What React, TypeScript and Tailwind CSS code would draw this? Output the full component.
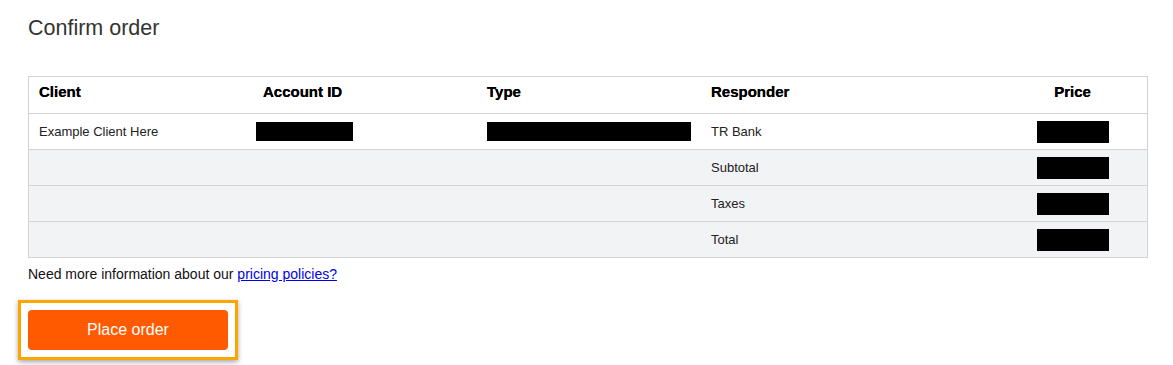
import React from 'react';

type Row = {
  client?: string;
  account?: boolean;
  type?: boolean;
  responder: string;
  striped: boolean;
};

const rows: Row[] = [
  { client: 'Example Client Here', account: true, type: true, responder: 'TR Bank', striped: false },
  { responder: 'Subtotal', striped: true },
  { responder: 'Taxes', striped: true },
  { responder: 'Total', striped: true },
];

function Redacted({ className }: { className: string }) {
  return <div className={`bg-black ${className}`} />;
}

export default function App() {
  return (
    <div className="min-h-screen bg-white px-[28px] pt-[14px] font-['Liberation_Sans',Arial,sans-serif] text-[#222]">
      <h1 className="text-[21.5px] leading-[28px] text-[#333]">Confirm order</h1>

      {/* Order table */}
      <div className="mt-[34px] w-[1120px] border border-[#d3d3d3]">
        <div className="grid h-[36px] grid-cols-[224px_224px_224px_224px_1fr] items-center pb-[6px] text-[15px] font-bold text-black [text-shadow:0_0_0.4px_#000]">
          <div className="px-[10px]">Client</div>
          <div className="px-[10px]">Account ID</div>
          <div className="px-[10px]">Type</div>
          <div className="px-[10px]">Responder</div>
          <div className="pl-[73px] text-center">Price</div>
        </div>

        {rows.map((row) => (
          <div
            key={row.responder}
            className={`grid h-[36px] grid-cols-[224px_224px_224px_224px_1fr] items-center border-t border-[#d3d3d3] text-[13px] ${
              row.striped ? 'bg-[#f2f3f5]' : 'bg-white'
            }`}
          >
            <div className="px-[10px]">{row.client}</div>
            <div className="px-[10px]">
              {row.account && <Redacted className="-ml-[7px] h-[19px] w-[97px]" />}
            </div>
            <div className="px-[10px]">
              {row.type && <Redacted className="h-[19px] w-[204px]" />}
            </div>
            <div className="px-[10px]">{row.responder}</div>
            <div className="flex justify-center pl-[73px]">
              <Redacted className="h-[22px] w-[72px]" />
            </div>
          </div>
        ))}
      </div>

      <p className="mt-[6px] text-[14px] leading-[20px] text-[#111]">
        Need more information about our{' '}
        <a href="#" className="text-[#0000ee] underline">
          pricing policies?
        </a>
      </p>

      {/* Highlighted CTA */}
      <div className="-ml-[10px] mt-[16px] inline-flex border-[3px] border-[#ffa500] bg-white p-[7px] shadow-[0_2px_5px_rgba(0,0,0,0.35)]">
        <button className="h-[40px] w-[200px] rounded-[4px] bg-[#ff5a00] text-[16px] text-white">
          Place order
        </button>
      </div>
    </div>
  );
}
